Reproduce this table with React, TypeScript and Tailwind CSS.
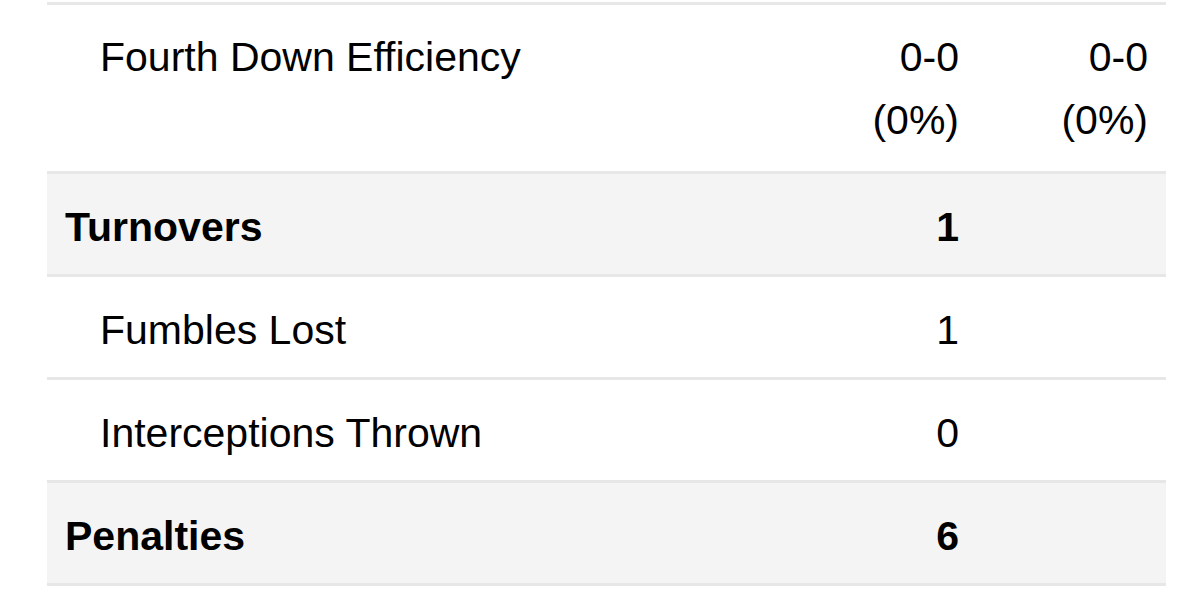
import React from "react";

type Row = {
  label: string;
  bold?: boolean;
  a: string[];
  b: string[];
};

const rows: Row[] = [
  { label: "Fourth Down Efficiency", a: ["0-0", "(0%)"], b: ["0-0", "(0%)"] },
  { label: "Turnovers", bold: true, a: ["1"], b: [] },
  { label: "Fumbles Lost", a: ["1"], b: [] },
  { label: "Interceptions Thrown", a: ["0"], b: [] },
  { label: "Penalties", bold: true, a: ["6"], b: [] },
];

function Cell({ lines }: { lines: string[] }) {
  return (
    <div className="w-[189px] shrink-0 pr-[18px] text-right">
      {lines.map((l, i) => (
        <div key={i}>{l}</div>
      ))}
    </div>
  );
}

export default function App() {
  return (
    <div className="w-[1200px] h-[608px] overflow-hidden bg-white text-black font-['Liberation_Sans',Arial,Helvetica,sans-serif] text-[41px] leading-[61px]">
      <div className="ml-[47px] mt-[2px] w-[1119px] border-t-[3px] border-[#e7e7e7]">
        {rows.map((r, i) => {
          const multi = r.a.length > 1;
          return (
            <div
              key={i}
              className={
                multi
                  ? "flex items-start border-b-[3px] border-[#e7e7e7] pt-[21px] pb-[19px] leading-[63px]"
                  : r.bold
                  ? "flex h-[103px] items-center border-b-[3px] border-[#e7e7e7] bg-[#f4f4f4] pt-[6px] font-bold"
                  : "flex h-[103px] items-center border-b-[3px] border-[#e7e7e7] pt-[6px]"
              }
            >
              <div className={r.bold ? "flex-1 pl-[18px]" : "flex-1 pl-[53px]"}>{r.label}</div>
              <Cell lines={r.a} />
              <Cell lines={r.b} />
            </div>
          );
        })}
      </div>
    </div>
  );
}
